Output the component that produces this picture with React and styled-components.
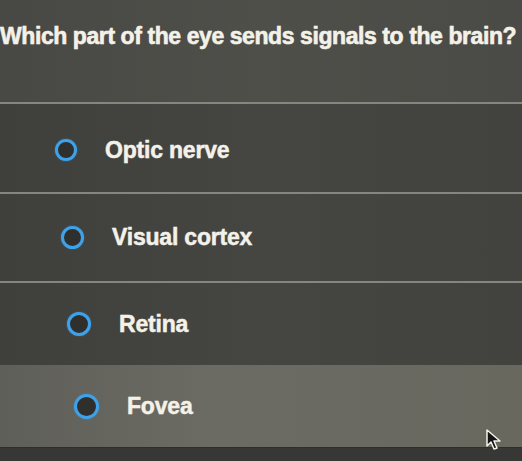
import React from "react";
import styled, { createGlobalStyle } from "styled-components";

const Global = createGlobalStyle`
  html, body { margin: 0; padding: 0; background: #3b3b38; }
  body { width: 522px; height: 461px; overflow: hidden; }
`;

const Screen = styled.div`
  position: relative;
  width: 522px;
  height: 461px;
  display: flex;
  flex-direction: column;
  background: linear-gradient(90deg, #484844 0%, #4f4f4a 50%, #4a4a46 100%);
  font-family: "Liberation Sans", Arial, sans-serif;
  color: #f3f1e8;
  overflow: hidden;
`;

const Question = styled.div`
  height: 102px;
  box-sizing: border-box;
  padding: 23px 0 0 0;
  font-size: 23px;
  font-weight: 700;
  letter-spacing: -0.42px;
  white-space: nowrap;
  -webkit-text-stroke: 0.5px #f3f1e8;
  text-shadow: 0 0 1px rgba(255, 255, 255, 0.4);
`;

const Option = styled.div`
  height: ${(p) => p.$h}px;
  box-sizing: border-box;
  display: flex;
  align-items: center;
  gap: ${(p) => p.$gap}px;
  padding-left: ${(p) => p.$indent}px;
  padding-top: ${(p) => p.$pt}px;
  border-top: ${(p) => (p.$divider ? "2px solid #86867f" : "none")};
  background: ${(p) =>
    p.$hover
      ? "linear-gradient(90deg, #5f5f59 0%, #6b6b64 40%, #68685f 100%)"
      : "linear-gradient(90deg, #3f3f3b 0%, #454541 50%, #42423e 100%)"};
  font-size: 23px;
  font-weight: 700;
  letter-spacing: -0.2px;
  -webkit-text-stroke: 0.4px #f3f1e8;
  text-shadow: 0 0 1px rgba(255, 255, 255, 0.35);
`;

const Radio = styled.span`
  width: ${(p) => p.$size}px;
  height: ${(p) => p.$size}px;
  box-sizing: border-box;
  border-radius: 50%;
  border: 3px solid #3ea2ea;
  background: #2f302e;
  flex: none;
  box-shadow: 0 0 2px rgba(62, 162, 234, 0.5);
`;

const Bottom = styled.div`
  flex: 1;
  background: #373735;
  border-top: 1px solid #2e2e2c;
`;

const Cursor = styled.svg`
  position: absolute;
  left: 486px;
  top: 429px;
`;

const options = [
  { label: "Optic nerve", indent: 55, gap: 28, size: 22, h: 90, pt: 4 },
  { label: "Visual cortex", indent: 61, gap: 28, size: 23, h: 89, pt: 0 },
  { label: "Retina", indent: 67, gap: 28, size: 24, h: 84, pt: 0 },
  { label: "Fovea", indent: 74, gap: 28, size: 25, h: 82, pt: 0, hover: true },
];

export default function App() {
  return (
    <Screen>
      <Global />
      <Question>Which part of the eye sends signals to the brain?</Question>
      {options.map((o, i) => (
        <Option
          key={o.label}
          $indent={o.indent}
          $gap={o.gap}
          $h={o.h}
          $pt={o.pt}
          $divider={i < 3}
          $hover={o.hover}
        >
          <Radio $size={o.size} />
          {o.label}
        </Option>
      ))}
      <Bottom />
      <Cursor width="16" height="22" viewBox="0 0 16 22">
        <path
          d="M1 1 L1 17 L5 13 L8 20 L11 19 L8 12 L14 12 Z"
          fill="#151515"
          stroke="#f4f2ea"
          strokeWidth="1.5"
          strokeLinejoin="round"
        />
      </Cursor>
    </Screen>
  );
}
